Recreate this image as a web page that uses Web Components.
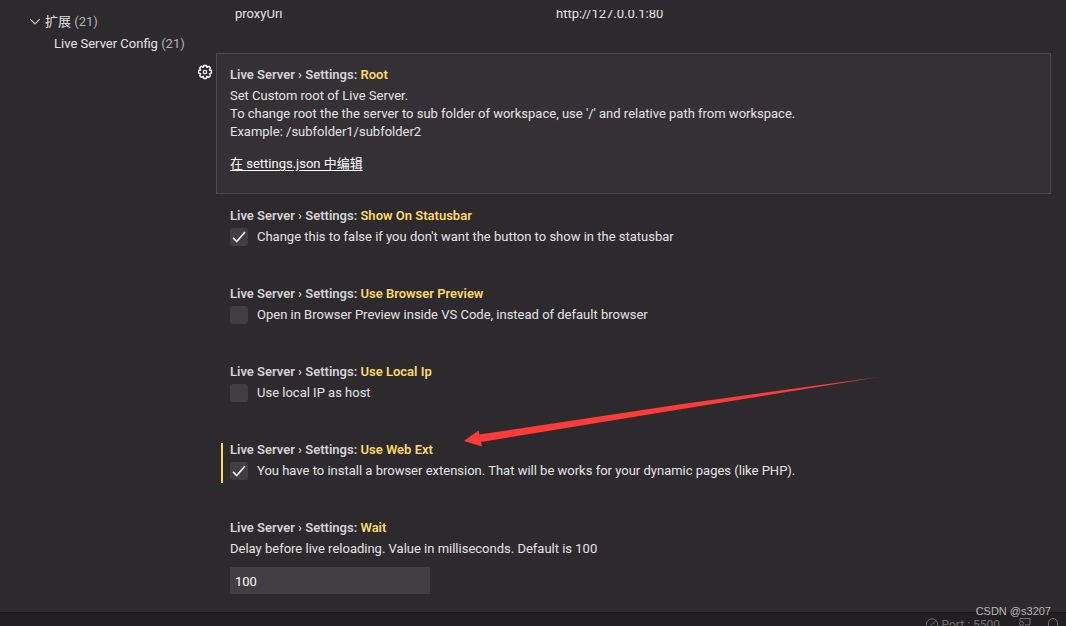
<!DOCTYPE html>
<html lang="zh-CN">
<head>
<meta charset="utf-8">
<title>Settings</title>
<style>
  body {
    margin: 0;
    background: #2d2a2e;
    color: #e4e3e4;
    font: 13px/18px Roboto, "Noto Sans CJK SC", sans-serif;
  }
</style>
</head>
<body>
<settings-page></settings-page>

<template id="settings-page">
  <style>
    :host { display: flex; flex-direction: column; height: 100vh; overflow: hidden; position: relative; }
    .editor { display: grid; grid-template-columns: 192px 1fr; flex: 1 0 auto; margin-top: 10px; overflow: hidden; }
    main { padding-right: 15px; min-width: 0; }
    .mark { position: absolute; right: 15px; bottom: 6px; color: #b9b8b9; font: 11px/18px "Liberation Sans", sans-serif; }
    pointer-arrow { position: absolute; left: 464px; top: 376px; }
  </style>
  <div class="editor">
    <settings-toc></settings-toc>
    <main>
      <object-setting></object-setting>
      <setting-item name="Root" focused>
        Set Custom root of Live Server.<br>To change root the the server to sub folder of workspace, use '/' and relative path from workspace.<br>Example: /subfolder1/subfolder2
        <edit-link slot="control"></edit-link>
      </setting-item>
      <setting-item name="Show On Statusbar" kind="check" checked>Change this to false if you don't want the button to show in the statusbar</setting-item>
      <setting-item name="Use Browser Preview" kind="check">Open in Browser Preview inside VS Code, instead of default browser</setting-item>
      <setting-item name="Use Local Ip" kind="check">Use local IP as host</setting-item>
      <setting-item name="Use Web Ext" kind="check" checked modified>You have to install a browser extension. That will be works for your dynamic pages (like PHP).</setting-item>
      <setting-item name="Wait" kind="text" value="100">Delay before live reloading. Value in milliseconds. Default is 100</setting-item>
    </main>
  </div>
  <status-bar></status-bar>
  <pointer-arrow></pointer-arrow>
  <span class="mark">CSDN @s3207</span>
</template>

<template id="settings-toc">
  <style>
    :host { display: block; padding-top: 1px; }
    a { display: flex; align-items: center; height: 22px; color: inherit; text-decoration: none; white-space: pre; }
    .group { padding-left: 29px; }
    .leaf { padding-left: 54px; }
    svg { width: 12px; height: 12px; margin-right: 4px; }
    .count { color: #b3b1b3; }
  </style>
  <nav>
    <a class="group" href="#ext"><svg viewBox="0 0 12 12" fill="none" stroke="#c8c7c8" stroke-width="1.2"><path d="M1.2 3.2 6 8l4.8-4.8"/></svg>扩展 <span class="count">(21)</span></a>
    <a class="leaf" href="#live">Live Server Config <span class="count">(21)</span></a>
  </nav>
</template>

<template id="object-setting">
  <style>
    :host { display: block; height: 43px; overflow: hidden; padding-left: 43px; box-sizing: border-box; }
    table { width: 100%; margin-top: -7px; border-collapse: collapse; table-layout: fixed; }
    td { padding: 0; height: 22px; }
    td:first-child { width: 321px; }
  </style>
  <table><tr><td>proxyUri</td><td>http://127.0.0.1:80</td></tr></table>
</template>

<template id="setting-item">
  <style>
    :host { display: block; position: relative; margin-left: 24px; padding: 13px 14px 26px; }
    :host([focused]) { background: #343135; box-shadow: inset 0 0 0 1px #4b494c; padding-bottom: 21px; }
    :host([kind="text"]) { padding-bottom: 18px; }
    :host([modified])::before { content: ""; position: absolute; left: 5px; top: 15px; width: 2px; height: 40px; background: #ffd866; }
    h3 { margin: 0 0 3px; font-size: 13px; line-height: 18px; font-weight: 600; color: #d4d3d4; }
    h3 b { font-weight: 600; color: #ffd866; }
    .row { display: flex; gap: 9px; line-height: 18px; }
    .box { display: none; }
    :host([kind="check"]) .box { display: grid; }
    .box > * { grid-area: 1 / 1; width: 18px; height: 18px; margin: 0; }
    .box input { appearance: none; background: #403e41; border-radius: 3px; }
    .box svg { display: none; pointer-events: none; }
    .box input:checked + svg { display: block; }
    .value { display: none; }
    :host([kind="text"]) .value { display: block; width: 200px; height: 27px; box-sizing: border-box; margin-top: 9px; padding: 1px 5px 0; border: 0; background: #403e41; color: #fcfcfa; font: inherit; }
    .gear { display: none; }
    :host([focused]) .gear { display: block; position: absolute; left: -19px; top: 11px; width: 16px; height: 16px; padding: 0; border: 0; background: none; }
    .gear svg { display: block; }
  </style>
  <button class="gear" aria-label="More actions"><svg viewBox="0 0 16 16" width="16" height="16" fill="none" stroke="#fcfcfa" stroke-width="1.3" stroke-linejoin="round"><path d="M6.800 1.300h2.400l.5 1.700 1.800-.9 1.500 1.500-.9 1.800 1.800.5v2.400l-1.800.5.9 1.800-1.500 1.500-1.800-.9-.5 1.900H6.800l-.5-1.900-1.800.9L3 10.600l.9-1.800-1.800-.5V5.900l1.800-.5L3 3.600l1.500-1.500 1.800.9z" transform="translate(-.6 0) scale(1.080 1.100)"/><circle cx="8" cy="8" r="1.700"/></svg></button>
  <h3>Live Server › Settings: <b></b></h3>
  <div class="row">
    <span class="box"><input type="checkbox" id="check"><svg viewBox="0 0 18 18" fill="none" stroke="#fcfcfa" stroke-width="1.5"><path d="M3 9.800 6.700 13.600 15 4"/></svg></span>
    <label><slot></slot></label>
  </div>
  <input class="value" id="value" type="text">
  <slot name="control"></slot>
</template>

<template id="edit-link">
  <style>
    :host { display: block; margin-top: 14px; }
    a { color: #fcfcfa; text-underline-offset: 2px; }
  </style>
  <a href="#settings.json">在 settings.json 中编辑</a>
</template>

<template id="status-bar">
  <style>
    :host { display: flex; flex: none; align-items: center; height: 24px; box-sizing: border-box; padding-right: 6px; background: #221f22; border-top: 1px solid #19181a; color: #727072; font-size: 12px; justify-content: flex-end; }
    button { display: flex; align-items: center; gap: 3px; padding: 0; border: 0; background: none; color: inherit; font: inherit; }
    .port { margin-right: 17px; }
    .feedback { margin-right: 15px; }
    svg { display: block; width: 14px; height: 14px; fill: none; stroke: currentColor; stroke-width: 1; }
  </style>
  <button class="port"><svg viewBox="0 0 14 14"><circle cx="7" cy="6.500" r="5.700"/><path d="m3 10.500 8-8"/></svg>Port : 5500</button>
  <button class="feedback" aria-label="Feedback"><svg viewBox="0 0 14 14"><path d="M3 3V.5h10v6h-2L9 8.500V6.500H8"/><circle cx="4.500" cy="5.500" r="2"/><path d="M1 12c0-5 7-5 7 0"/></svg></button>
  <button aria-label="Notifications"><svg viewBox="0 0 14 14"><path d="M2.500 9.500V5a4.500 4.500 0 0 1 9 0v4.500l1 1h-11zM5.500 11a1.500 1.500 0 0 0 3 0"/></svg></button>
</template>

<template id="pointer-arrow">
  <style>:host { display: block; pointer-events: none; } svg { display: block; }</style>
  <svg width="416" height="72" viewBox="0 0 416 72" fill="#ff3a3a"><path d="M0 65 14.500 54.500 15.500 58.500 215 28.500 415 1 215 33.500 17 66 18 70.500z"/></svg>
</template>

<script>
  class TemplateElement extends HTMLElement {
    constructor() {
      super();
      const template = document.getElementById(this.localName);
      this.attachShadow({ mode: 'open' }).append(template.content.cloneNode(true));
    }
  }

  class SettingItem extends TemplateElement {
    connectedCallback() {
      const root = this.shadowRoot;
      root.querySelector('h3 b').textContent = this.getAttribute('name');
      const kind = this.getAttribute('kind');
      if (kind === 'check') root.querySelector('label').htmlFor = 'check';
      if (kind === 'text') root.querySelector('label').htmlFor = 'value';
      root.querySelector('#check').checked = this.hasAttribute('checked');
      root.querySelector('#value').value = this.getAttribute('value') || '';
    }
  }

  customElements.define('setting-item', SettingItem);
  for (const name of ['settings-toc', 'object-setting', 'edit-link', 'status-bar', 'pointer-arrow', 'settings-page']) {
    customElements.define(name, class extends TemplateElement {});
  }
</script>
</body>
</html>
